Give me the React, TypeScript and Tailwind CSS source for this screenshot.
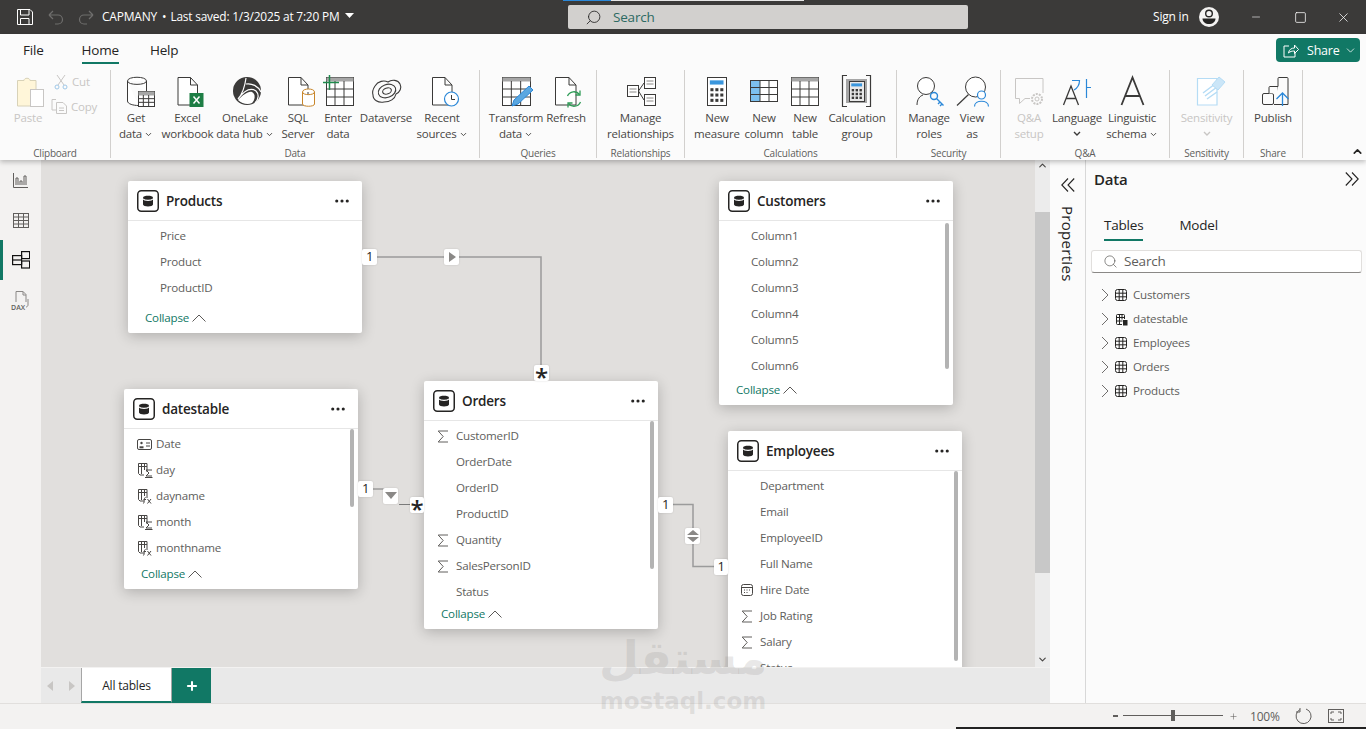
import type { ReactNode } from "react";
import { ChevronDown, ChevronUp, Search, Minus, Square, X, Plus, MoreHorizontal } from "lucide-react";

const INK = "#3b3a39";
const OFF = "#c8c6c4";

// icon slot of a ribbon button: viewBox is in page coordinates, so c = centre x of the button
function RibbonButton({ w, c, lines, off, chev, children }: { w: number; c: number; lines: string[]; off?: boolean; chev?: boolean; children: ReactNode }) {
  return (
    <div className={`flex flex-col items-center shrink-0 text-[11.5px] leading-[16px] ${off ? "text-[#c8c6c4]" : "text-[#484644]"}`} style={{ width: w }}>
      <svg width="60" height="35" viewBox={`${c - 30} 74 60 35`} fill="none" className="shrink-0 overflow-visible mb-[1px]">
        {children}
      </svg>
      {lines.map((l, i) => (
        <div key={l} className="flex items-center whitespace-nowrap h-[16px]">
          {l}
          {chev && i === lines.length - 1 && <ChevronDown size={9} strokeWidth={2.5} className="ml-[2px]" />}
        </div>
      ))}
    </div>
  );
}

function Group({ w, label, pl = 0, children }: { w: number; label: string; pl?: number; children?: ReactNode }) {
  return (
    <div className="relative flex flex-col shrink-0 border-r border-[#d2d0ce] mt-[2px] h-[88px]" style={{ width: w }}>
      <div className="flex mt-[4px]" style={{ paddingLeft: pl }}>{children}</div>
      <div className="absolute left-0 right-0 -bottom-[2px] text-center text-[10px] leading-[14px] text-[#605e5c]">{label}</div>
    </div>
  );
}

function Doc({ x, r = 0 }: { x: number; r?: number }) {
  const e = x + 20 + r;
  return <path d={`M${x + .5} 77.5H${e - 7}L${e} 85V105H${x + .5}Z M${e - 7} 77.5V85H${e}`} stroke={INK} fill="#fff" />;
}

function GridTable({ x, y, w, h, head = true }: { x: number; y: number; w: number; h: number; head?: boolean }) {
  const top = head ? y + 4 : y;
  const rowH = (y + h - top) / 3;
  return (
    <g stroke={INK} fill="#fff">
      <rect x={x + .5} y={y + .5} width={w} height={h} />
      {head && <rect x={x + .5} y={y + .5} width={w} height={4} fill="#a6a6a6" stroke="none" />}
      <path d={`M${x + w / 3} ${top}V${y + h} M${x + (2 * w) / 3} ${top}V${y + h} M${x} ${top + rowH}H${x + w} M${x} ${top + 2 * rowH}H${x + w}`} fill="none" />
    </g>
  );
}

function Calc({ x, y, w, h, dim }: { x: number; y: number; w: number; h: number; dim?: boolean }) {
  const dots = [];
  for (let r = 0; r < 3; r++) for (let c = 0; c < 3; c++) dots.push(<rect key={`${r}${c}`} x={x + w * 0.18 + c * w * 0.26} y={y + h * 0.4 + r * h * 0.19} width={w * 0.16} height={w * 0.16} fill={INK} />);
  return (
    <g>
      <rect x={x + .5} y={y + .5} width={w} height={h} stroke={INK} fill={dim ? "#e8e8e8" : "#fff"} />
      <rect x={x + w * 0.15} y={y + h * 0.12} width={w * 0.72} height={h * 0.15} fill="#3a96dd" />
      {dots}
    </g>
  );
}

function SigmaIcon() {
  return (
    <svg width="12" height="13" viewBox="0 0 12 13" fill="none" stroke="#605e5c">
      <path d="M11 1H1.2L6.2 6.5L1.2 12H11" />
    </svg>
  );
}

function IdIcon() {
  return (
    <svg width="15" height="11" viewBox="0 0 15 11" fill="none" stroke="#484644">
      <rect x=".5" y=".5" width="14" height="10" rx="1.5" />
      <circle cx="4.5" cy="4" r="1.2" fill="#484644" stroke="none" />
      <path d="M2.5 8.3h4" strokeWidth="2" />
      <path d="M9 4h4M9 7h4" />
    </svg>
  );
}

function CalcColIcon({ fx }: { fx?: boolean }) {
  return (
    <svg width="16" height="16" viewBox="0 0 16 16" fill="none" stroke="#484644" strokeWidth="1">
      <path d="M10 10V1.5H1.5V11.5L3 13H7 M1.5 4.5H10 M4.5 1.5V12 M7.5 1.5V8" />
      {fx ? (
        <path d="M8.5 9.5c-1 0-1 1-1.2 3s-.3 2.8-1.3 2.8 M6.5 11.5H9 M10.5 11l3.5 4.5 M14 11l-3.5 4.5" />
      ) : (
        <path d="M15 8H9l3 3-3 3h6 M8 15.5h7.5" />
      )}
    </svg>
  );
}

function CalendarIcon() {
  return (
    <svg width="12" height="12" viewBox="0 0 12 12" fill="none" stroke="#484644">
      <rect x=".5" y=".5" width="11" height="11" rx="2" />
      <path d="M.5 3.5h11" />
      <path d="M3 6h1M5.5 6h1M8 6h1M3 8.5h1M5.5 8.5h1" />
    </svg>
  );
}

function TableHeadIcon() {
  return (
    <svg width="22" height="22" viewBox="0 0 22 22" fill="none">
      <rect x=".75" y=".75" width="20.5" height="20.5" rx="3.5" stroke="#252423" strokeWidth="1.5" />
      <path d="M6 7.5C6 5 16 5 16 7.5V14.5C16 17 6 17 6 14.5Z" fill="#252423" />
      <path d="M6 8.8C7.5 10.8 14.5 10.8 16 8.8" stroke="#fff" strokeWidth="1.2" />
    </svg>
  );
}

function DoubleChevron({ left }: { left?: boolean }) {
  return (
    <svg width="14" height="14" viewBox="0 0 14 14" fill="none" stroke="#252423" strokeWidth="1.1">
      <path d={left ? "M7 .5L.8 7L7 13.5 M13.2 .5L7 7L13.2 13.5" : "M7 .5L13.2 7L7 13.5 M.8 .5L7 7L.8 13.5"} />
    </svg>
  );
}

type Col = { name: string; icon?: ReactNode };

function TableCard({ x, y, w = 234, h, title, cols, bar }: { x: number; y: number; w?: number; h: number; title: string; cols: Col[]; bar?: [number, number] }) {
  return (
    <div className="absolute flex flex-col bg-white rounded-[2px] shadow-[0_3px_14px_rgba(0,0,0,0.22)]" style={{ left: x, top: y, width: w, height: h }}>
      <div className="flex items-center h-[40px] shrink-0 border-b border-[#e6e6e6] pl-[9px] pr-[11px]">
        <TableHeadIcon />
        <span className="ml-[7px] mt-[2px] text-[13.5px] font-semibold text-[#252423]">{title}</span>
        <MoreHorizontal size={18} strokeWidth={2.2} className="ml-auto text-[#252423]" />
      </div>
      <div className="relative flex-1 min-h-0 overflow-hidden pt-[2px]">
        {cols.map((c) => (
          <div key={c.name} className="flex items-center h-[26px] pl-[13px] text-[11.6px] text-[#605e5c] whitespace-nowrap">
            <span className="w-[19px] flex items-center shrink-0">{c.icon}</span>
            {c.name}
          </div>
        ))}
        {bar && <div className="absolute right-[4px] w-[4px] rounded-[2px] bg-[#b3b3b3]" style={{ top: bar[0], height: bar[1] }} />}
      </div>
      {title !== "Employees" && (
        <div className="flex items-center h-[30px] shrink-0 pl-[17px] text-[11.6px] text-[#117865]">
          Collapse
          <svg width="14" height="8" viewBox="0 0 14 8" fill="none" stroke="#484644" strokeWidth=".9" className="ml-[3px]">
            <path d="M.5 7.500L7 1l6.500 6.500" />
          </svg>
        </div>
      )}
    </div>
  );
}

function Tag({ x, y, w = 15, h = 16, children }: { x: number; y: number; w?: number; h?: number; children: ReactNode }) {
  return (
    <div className="absolute flex items-center justify-center bg-white rounded-[2px] text-[13px] font-medium text-[#252423] shadow-[0_0_2px_rgba(0,0,0,0.15)]" style={{ left: x, top: y, width: w, height: h }}>
      {children}
    </div>
  );
}

function Star() {
  return <span className="text-[24px] leading-none font-semibold mt-[7px]">*</span>;
}

function TreeRow({ name, calc }: { name: string; calc?: boolean }) {
  return (
    <div className="flex items-center h-[24px] text-[11.6px] text-[#605e5c]">
      <svg width="8" height="14" viewBox="0 0 8 14" fill="none" stroke="#605e5c" strokeWidth=".9" className="ml-[15px]">
        <path d="M1 1l6 6-6 6" />
      </svg>
      <svg width="13" height="13" viewBox="0 0 13 13" fill="none" stroke="#252423" className="ml-[6px]">
        {calc ? (
          <>
            <path d="M7 11.5H2.5a1 1 0 0 1-1-1v-8a1 1 0 0 1 1-1h6a1 1 0 0 1 1 1V6 M1.5 4.5h8 M1.5 8h6 M4.5 1.5v10 M7 1.5v5" />
            <rect x="8" y="7" width="4.5" height="5.5" fill="#252423" stroke="none" />
          </>
        ) : (
          <>
            <rect x=".5" y=".5" width="11" height="11" rx="2" />
            <path d="M4.2.5v11 M7.8.5v11 M.5 4.2h11 M.5 7.8h11" />
          </>
        )}
      </svg>
      <span className="ml-[5px]">{name}</span>
    </div>
  );
}

const sig = <SigmaIcon />;

export default function App() {
  return (
    <div className="relative flex flex-col h-[729px] w-[1366px] overflow-hidden bg-[#f3f2f1] font-['Open_Sans','Noto_Sans',sans-serif] tracking-[-0.2px]">
      {/* title bar */}
      <div className="relative flex items-center h-[34px] shrink-0 bg-[#3b3a39] text-white">
        <div className="absolute left-[563px] top-0 h-[1px] w-[48px] bg-[#2b88d8]" />
        <div className="absolute left-[611px] top-0 h-[1px] w-[193px] bg-[#e6e6e6]" />
        <svg width="16" height="16" viewBox="0 0 16 16" fill="none" stroke="#fff" className="ml-[17px] shrink-0">
          <path d="M.5.5H13L15.5 3V15.5H.5Z M3.5.5V6H12V.5 M3.5 15.5V9.5H12V15.5" />
        </svg>
        <svg width="16" height="16" viewBox="0 0 16 16" fill="none" stroke="#6f6e6d" strokeWidth="1.2" className="ml-[15px] shrink-0">
          <path d="M1 6H10a4.5 4.5 0 0 1 0 9H7 M1 6l4-4 M1 6l4 4" />
        </svg>
        <svg width="16" height="16" viewBox="0 0 16 16" fill="none" stroke="#6f6e6d" strokeWidth="1.2" className="ml-[14px] shrink-0">
          <path d="M15 6H6a4.5 4.5 0 0 0 0 9h3 M15 6l-4-4 M15 6l-4 4" />
        </svg>
        <span className="ml-[8px] text-[12px] whitespace-nowrap">CAPMANY</span>
        <span className="ml-[5px] text-[12px]">•</span>
        <span className="ml-[4px] text-[11.9px] whitespace-nowrap">Last saved: 1/3/2025 at 7:20 PM</span>
        <svg width="9" height="5" viewBox="0 0 9 5" fill="#fff" className="ml-[6px] mb-[3px]"><path d="M0 0h9L4.5 5Z" /></svg>

        <div className="absolute left-[568px] top-[5px] flex items-center w-[400px] h-[24px] rounded-[2px] bg-[#d2d0ce] pl-[17px]">
          <Search size={17} strokeWidth={1.2} className="-scale-x-100 text-[#252423]" />
          <span className="ml-[11px] text-[13.5px] text-[#2d6a62]">Search</span>
        </div>

        <span className="absolute left-[1153px] text-[12px]">Sign in</span>
        <svg width="20" height="20" viewBox="0 0 20 20" className="absolute left-[1199px] top-[7px]">
          <circle cx="10" cy="10" r="10" fill="#f3f2f1" />
          <circle cx="10" cy="6.5" r="3.3" fill="none" stroke="#252423" strokeWidth="1.4" />
          <path d="M3.5 11.5h13c0 3.5-3 5.5-6.500 5.500s-6.500-2-6.500-5.500Z" fill="#252423" />
        </svg>
        <Minus size={12} strokeWidth={1.2} className="absolute left-[1250px] top-[11px]" />
        <Square size={13} strokeWidth={1.4} className="absolute left-[1294px] top-[11px]" />
        <X size={15} strokeWidth={1.2} className="absolute left-[1336px] top-[10px]" />
      </div>

      {/* ribbon */}
      <div className="relative z-10 h-[126px] shrink-0 bg-[#fbfbfb] shadow-[0_2px_5px_rgba(0,0,0,0.25)]">
        <div className="flex items-start h-[34px] text-[13.5px] text-[#252423] pt-[6px]">
          <span className="ml-[23px]">File</span>
          <span className="ml-[38px] font-medium border-b-[2px] border-[#117865] h-[24px] leading-[20px]">Home</span>
          <span className="ml-[31px]">Help</span>
          <div className="absolute left-[1276px] top-[4px] flex items-center w-[84px] h-[24px] rounded-[4px] bg-[#117865] text-white text-[12.5px] pl-[7px]">
            <svg width="16" height="15" viewBox="0 0 16 15" fill="none" stroke="#fff">
              <path d="M6 3H1v11h11v-4 M5.500 10c.5-3.500 3-5 6-5V2l4 4.500-4 4V8c-2.500 0-4.500.5-6 2Z" />
            </svg>
            <span className="ml-[8px] mt-[2px]">Share</span>
            <ChevronDown size={13} strokeWidth={1.4} className="ml-[4px]" />
          </div>
        </div>

        <div className="flex items-start">
          <Group w={111} label="Clipboard">
            <div className="relative w-[56px] flex flex-col items-center text-[11.5px] leading-[16px] text-[#c8c6c4]">
              <svg width="36" height="35" viewBox="10 74 36 35" fill="none" className="shrink-0 mb-[1px]">
                <path d="M17.500 80.500H24c0-3 6-3 6 0h6V106H17.500Z" fill="#fff6d9" stroke="#d8d2b8" />
                <rect x="30.500" y="89.500" width="13" height="17" fill="#fff" stroke={OFF} />
              </svg>
              Paste
            </div>
            <div className="flex flex-col text-[11.5px] text-[#c8c6c4] -ml-[5px]">
              <div className="flex items-center h-[25px] -mt-[5px]">
                <svg width="14" height="16" viewBox="0 0 14 16" fill="none" stroke={OFF} className="ml-[3px]">
                  <path d="M3 1l7 10 M11 1L4 11" />
                  <circle cx="3" cy="13" r="2" stroke="#9fc8e8" />
                  <circle cx="11" cy="13" r="2" stroke="#9fc8e8" />
                </svg>
                <span className="ml-[4px]">Cut</span>
              </div>
              <div className="flex items-center h-[25px]">
                <svg width="17" height="15" viewBox="0 0 17 15" fill="none" stroke={OFF}>
                  <path d="M5 .5H1V11h4 M5.500 3.500H12l3.500 3.500V14.500h-10Z M8 9h5M8 11.500h5" />
                </svg>
                <span className="ml-[3px]">Copy</span>
              </div>
            </div>
          </Group>

          <Group w={369} label="Data">
            <RibbonButton w={50} c={136} lines={["Get", "data"]} chev>
              <path d="M127.500 81c0-5 19-5 19 0V92M127.500 81V101c0 3 6 4.500 11 4.500M127.500 81c0 4.500 19 4.500 19 0" stroke={INK} fill="#fff" />
              <GridTable x={138} y={91} w={16} h={15} />
            </RibbonButton>
            <RibbonButton w={53} c={187.5} lines={["Excel", "workbook"]}>
              <Doc x={177} />
              <rect x="189" y="93" width="14" height="14" fill="#1e7e45" />
              <path d="M193 96.500l6 7 M199 96.500l-6 7" stroke="#fff" strokeWidth="1.5" />
            </RibbonButton>
            <RibbonButton w={62} c={245} lines={["OneLake", "data hub"]} chev>
              <circle cx="247" cy="91" r="14" fill="#3b3a39" />
              <path d="M246 78c-1 8-3 15-8 21 M246 84c6-1 12 2 15 8 M238 99c6-8 12-12 18-8 3 3 3 8-1 12" stroke="#fff" strokeWidth="1.2" />
              <path d="M238 100c5-5 10-9 14-8 4 2 3 8 0 11-4 2-10 1-14-3Z" fill="#fff" />
            </RibbonButton>
            <RibbonButton w={44} c={298} lines={["SQL", "Server"]}>
              <Doc x={288} />
              <path d="M302.500 92c0-4 12-4 12 0V104c0 3-12 3-12 0Z M302.500 92c0 3.500 12 3.500 12 0" stroke="#c8862b" fill="#fff" />
            </RibbonButton>
            <RibbonButton w={36} c={338} lines={["Enter", "data"]}>
              <GridTable x={326} y={77} w={27} h={28} />
              <path d="M329.500 75V90 M323 82.500H339" stroke="#1e8a4c" strokeWidth="1.5" />
            </RibbonButton>
            <RibbonButton w={60} c={386} lines={["Dataverse"]}>
              <g stroke={INK} strokeWidth="1.1">
                <path d="M375 86c3-5 9-6 13-4 4-3 10-2 12 2 2 4 0 8-4 10-1 5-6 8-12 8-6 1-11-2-11-7-1-3 0-6 2-9Z" />
                <ellipse cx="387" cy="91" rx="9" ry="6.500" transform="rotate(-20 387 91)" />
                <ellipse cx="387" cy="91" rx="4.500" ry="3" transform="rotate(-20 387 91)" />
              </g>
            </RibbonButton>
            <RibbonButton w={52} c={442} lines={["Recent", "sources"]} chev>
              <Doc x={432} />
              <circle cx="451.500" cy="99" r="7" stroke="#2b88d8" strokeWidth="1.2" fill="#fff" />
              <path d="M451.500 95v4.500h3.500" stroke={INK} />
            </RibbonButton>
          </Group>

          <Group w={117} label="Queries" pl={6}>
            <RibbonButton w={60} c={516} lines={["Transform", "data"]} chev>
              <GridTable x={502} y={77} w={28} h={28} />
              <path d="M512 106l2-6 15-14 4 4-15 14Z" fill="#5ba7e0" stroke="#2b88d8" />
            </RibbonButton>
            <RibbonButton w={40} c={566} lines={["Refresh"]}>
              <Doc x={555} r={1} />
              <path d="M567.500 96a7 7 0 0 1 12-1.500M580.500 102a7 7 0 0 1-12 1.500" stroke="#2e9b56" strokeWidth="1.3" fill="none" />
              <path d="M580 90.500v4.500h-4.500 M568 107.500V103h4.500" stroke="#2e9b56" strokeWidth="1.3" />
            </RibbonButton>
          </Group>

          <Group w={88} label="Relationships">
            <RibbonButton w={87} c={640} lines={["Manage", "relationships"]}>
              <g stroke={INK} fill="#fff">
                <rect x="626.500" y="85.500" width="11" height="11" />
                <rect x="643.500" y="77.500" width="11" height="11" />
                <rect x="643.500" y="94.500" width="11" height="11" />
                <path d="M637.500 91L643 83 M637.500 91L643 100" />
                <path d="M628.500 89h7M628.500 92h7M645.500 81h7M645.500 84h7M645.500 98h7M645.500 101h7" stroke="#8a8886" />
              </g>
            </RibbonButton>
          </Group>

          <Group w={212} label="Calculations" pl={9}>
            <RibbonButton w={46} c={717} lines={["New", "measure"]}>
              <Calc x={707} y={77} w={19} h={28} />
            </RibbonButton>
            <RibbonButton w={48} c={764} lines={["New", "column"]}>
              <rect x="750.500" y="80.500" width="27" height="21" stroke={INK} fill="#fff" />
              <rect x="751" y="81" width="9" height="20" fill="#7cc0ee" />
              <path d="M760 80.500V101.500 M769 80.500V101.500 M750.500 87.500H777.500 M750.500 94.500H777.500" stroke={INK} />
            </RibbonButton>
            <RibbonButton w={34} c={805} lines={["New", "table"]}>
              <GridTable x={791} y={77} w={27} h={28} />
            </RibbonButton>
            <RibbonButton w={70} c={857} lines={["Calculation", "group"]}>
              <path d="M847 75.500H842.500V106.500H847 M866 75.500H870.500V106.500H866" stroke={INK} strokeWidth="1.2" />
              <rect x="846" y="79" width="21" height="24" fill="#a6a6a6" />
              <Calc x={849} y={81} w={15} h={20} dim />
            </RibbonButton>
          </Group>

          <Group w={104} label="Security" pl={8}>
            <RibbonButton w={48} c={929} lines={["Manage", "roles"]}>
              <circle cx="926" cy="86" r="8.500" stroke={INK} fill="#fff" />
              <path d="M917 105c0-6 3-9 6-10" stroke={INK} />
              <circle cx="934" cy="96" r="3.500" stroke="#2b88d8" strokeWidth="1.4" />
              <path d="M936.500 98.500l7 7 M940 102l-2 2 M942 104l-2 2" stroke="#2b88d8" strokeWidth="1.4" />
            </RibbonButton>
            <RibbonButton w={38} c={972} lines={["View", "as"]}>
              <circle cx="975.500" cy="87" r="10" stroke={INK} fill="#fff" />
              <path d="M968.500 94.500L957 105.500" stroke={INK} strokeWidth="1.2" />
              <circle cx="981.500" cy="95" r="4" stroke="#2b88d8" strokeWidth="1.2" fill="#fff" />
              <path d="M974.500 106.500c0-7 14-7 14 0" stroke="#2b88d8" strokeWidth="1.2" />
            </RibbonButton>
          </Group>

          <Group w={169} label="Q&A" pl={8}>
            <RibbonButton w={40} c={1029} lines={["Q&A", "setup"]} off>
              <path d="M1015.500 78.500H1043V93M1030 98.500H1025L1019.500 103.500V98.500H1015.500V78.500" stroke={OFF} />
              <circle cx="1037" cy="99" r="5" stroke={OFF} strokeWidth="2" strokeDasharray="2 1.100" />
              <circle cx="1037" cy="99" r="2" stroke={OFF} />
            </RibbonButton>
            <RibbonButton w={56} c={1077} lines={["Language", ""]}>
              <path d="M1063.500 105L1071 86L1078.500 105 M1066 98.500H1076" stroke={INK} strokeWidth="1.3" />
              <path d="M1072 80.500H1079.500C1079.500 85 1077.500 88 1074 90 M1086.500 79V98 M1086.500 87.500H1091" stroke="#2b88d8" strokeWidth="1.2" />
              <g transform="translate(1074 132)"><path d="M0 0l3 3 3-3" stroke={INK} strokeWidth="1.4" /></g>
            </RibbonButton>
            <RibbonButton w={54} c={1132} lines={["Linguistic", "schema"]} chev>
              <path d="M1121.500 105L1132.500 77.500L1143.500 105 M1125 96H1140" stroke={INK} strokeWidth="1.8" />
            </RibbonButton>
          </Group>

          <Group w={74} label="Sensitivity">
            <RibbonButton w={73} c={1206} lines={["Sensitivity", ""]} off>
              <path d="M1196.500 78.500H1216V105H1196.500Z" stroke="#b5dcf5" strokeWidth="1.2" fill="#fff" />
              <path d="M1202 93l12-9 M1204 96l12-9 M1206 99l10-7" stroke="#b5dcf5" strokeWidth="1.5" />
              <path d="M1211 85l7-8 6 5-7 8Z" fill="#cbe6f8" stroke="#b5dcf5" />
              <g transform="translate(1203 132)"><path d="M0 0l3 3 3-3" stroke={OFF} strokeWidth="1.4" /></g>
            </RibbonButton>
          </Group>

          <Group w={59} label="Share">
            <RibbonButton w={58} c={1273} lines={["Publish"]}>
              <g stroke={INK} fill="#fbfbfb">
                <rect x="1262.500" y="93.500" width="11" height="11" rx="1.500" />
                <path d="M1269 93.500V87.500a1 1 0 0 1 1-1h8V93" />
                <path d="M1278 86.500V78.500a1 1 0 0 1 1-1h8a1 1 0 0 1 1 1V104.500H1274" />
              </g>
              <path d="M1282.500 106V93 M1276.500 99l6-6 6 6" stroke="#2b88d8" strokeWidth="1.3" />
            </RibbonButton>
          </Group>
        </div>
        <ChevronUp size={13} strokeWidth={3} className="absolute right-[2px] bottom-[2px] text-[#252423]" />
      </div>

      {/* main */}
      <div className="flex flex-1 min-h-0">
        {/* left nav */}
        <div className="flex flex-col w-[41px] shrink-0 bg-[#f3f2f1]">
          <div className="flex items-center justify-center h-[40px]">
            <svg width="15" height="15" viewBox="0 0 15 15" fill="none" stroke="#605e5c">
              <path d="M.5 0V14.500H15 M3 12V5h2v7 M7 12V8h2v4 M11 12V3h2v9" />
            </svg>
          </div>
          <div className="flex items-center justify-center h-[40px]">
            <svg width="16" height="15" viewBox="0 0 16 15" fill="none" stroke="#605e5c">
              <rect x=".5" y=".5" width="15" height="14" />
              <path d="M.5 4h15M.5 7.500h15M.5 11h15M5.500.5v14M10.500.5v14" />
            </svg>
          </div>
          <div className="flex items-center justify-center h-[40px] border-l-[3px] border-[#117865] pr-[3px]">
            <svg width="18" height="18" viewBox="0 0 18 18" fill="none" stroke="#111" strokeWidth="1.2">
              <rect x=".6" y="4.600" width="9" height="9" />
              <rect x="9.600" y=".6" width="8" height="7" />
              <rect x="9.600" y="10" width="8" height="7" />
              <path d="M.6 9h9" />
            </svg>
          </div>
          <div className="relative flex items-center justify-center h-[40px]">
            <svg width="18" height="18" viewBox="0 0 18 18" fill="none" stroke="#8a8886">
              <path d="M4 11V.5H11L14 3.500V11 M11 .5V4H14 M16 8v6c0 1-1 2-2 2" />
            </svg>
            <span className="absolute left-[11px] top-[24px] text-[7px] font-semibold leading-none text-[#605e5c] tracking-normal">DAX</span>
          </div>
        </div>

        {/* canvas + tabs */}
        <div className="flex flex-col w-[1009px] shrink-0">
          <div className="flex flex-1 min-h-0">
            <div className="relative w-[994px] shrink-0 bg-[#e1dfdd] overflow-hidden">
              <TableCard x={87} y={21} h={152} title="Products" cols={[{ name: "Price" }, { name: "Product" }, { name: "ProductID" }]} />
              <TableCard
                x={678} y={21} h={224} title="Customers" bar={[2, 146]}
                cols={["Column1", "Column2", "Column3", "Column4", "Column5", "Column6"].map((name) => ({ name }))}
              />
              <TableCard
                x={83} y={229} h={200} title="datestable" bar={[0, 78]}
                cols={[
                  { name: "Date", icon: <IdIcon /> },
                  { name: "day", icon: <CalcColIcon /> },
                  { name: "dayname", icon: <CalcColIcon fx /> },
                  { name: "month", icon: <CalcColIcon /> },
                  { name: "monthname", icon: <CalcColIcon fx /> },
                ]}
              />
              <TableCard
                x={383} y={221} h={248} title="Orders" bar={[0, 148]}
                cols={[
                  { name: "CustomerID", icon: sig },
                  { name: "OrderDate" },
                  { name: "OrderID" },
                  { name: "ProductID" },
                  { name: "Quantity", icon: sig },
                  { name: "SalesPersonID", icon: sig },
                  { name: "Status" },
                ]}
              />
              <TableCard
                x={687} y={271} h={260} title="Employees" bar={[0, 190]}
                cols={[
                  { name: "Department" },
                  { name: "Email" },
                  { name: "EmployeeID" },
                  { name: "Full Name" },
                  { name: "Hire Date", icon: <CalendarIcon /> },
                  { name: "Job Rating", icon: sig },
                  { name: "Salary", icon: sig },
                  { name: "Status" },
                ]}
              />

              {/* relationships */}
              <svg width="994" height="507" className="absolute left-0 top-0 pointer-events-none" fill="none">
                <path d="M335 97H500V205" stroke="#9b9b9b" strokeWidth="1.5" />
                <path d="M332 329H344 M358 344.500H369" stroke="#7a7a7a" />
                <path d="M632 344.500H652V406.500H673" stroke="#9b9b9b" strokeWidth="1.500" />
              </svg>
              <Tag x={321} y={89}>1</Tag>
              <Tag x={403} y={89}>
                <svg width="10" height="10" viewBox="0 0 10 10" fill="#8a8886"><path d="M2 0l7 5-7 5Z" /></svg>
              </Tag>
              <Tag x={493} y={205}><Star /></Tag>
              <Tag x={317} y={321}>1</Tag>
              <Tag x={342} y={328}>
                <svg width="12" height="8" viewBox="0 0 12 8" fill="#8a8886"><path d="M0 0h12L6 7Z" /></svg>
              </Tag>
              <Tag x={369} y={337} w={14}><Star /></Tag>
              <Tag x={617} y={337}>1</Tag>
              <Tag x={644} y={368}>
                <svg width="12" height="12" viewBox="0 0 12 12" fill="#8a8886"><path d="M0 5L6 0l6 5Z M0 7h12l-6 5Z" /></svg>
              </Tag>
              <Tag x={673} y={399} w={14}>1</Tag>
            </div>
            {/* canvas scrollbar */}
            <div className="flex flex-col items-center w-[15px] shrink-0 bg-[#ececec]">
              <ChevronUp size={11} strokeWidth={2.5} className="text-[#484644]" />
              <div className="w-full h-[361px] bg-[#c8c8c8] mt-[41px]" />
              <ChevronDown size={11} strokeWidth={2.5} className="mt-[81px] text-[#484644]" />
            </div>
          </div>
          <div className="flex items-stretch h-[36px] shrink-0 bg-[#e9e9e9] border-t border-[#f3f2f1]">
            <div className="flex items-center w-[40px] pl-[6px] gap-[16px]">
              <svg width="6" height="10" viewBox="0 0 6 10" fill="#c8c6c4"><path d="M6 0v10L0 5Z" /></svg>
              <svg width="6" height="10" viewBox="0 0 6 10" fill="#c8c6c4"><path d="M0 0v10l6-5Z" /></svg>
            </div>
            <div className="flex items-center justify-center w-[91px] pt-[2px] bg-white border-x border-[#a6a6a6] border-b-[2px] border-b-[#117865] text-[12px] text-[#252423]">All tables</div>
            <div className="flex items-center justify-center w-[39px] bg-[#117865] text-white">
              <Plus size={14} strokeWidth={3.5} />
            </div>
          </div>
        </div>

        {/* properties */}
        <div className="flex flex-col items-center w-[36px] shrink-0 bg-[#fbfbfb] border-r border-[#d8d8d8]">
          <div className="mt-[18px]"><DoubleChevron left /></div>
          <span className="mt-[14px] [writing-mode:vertical-rl] text-[15px] font-medium tracking-[0.3px] text-[#252423]">Properties</span>
        </div>

        {/* data pane */}
        <div className="flex flex-col flex-1 min-w-0 bg-[#fbfbfb]">
          <div className="flex items-center justify-between h-[40px] pl-[8px] pr-[7px] -mt-[1px] mb-[1px]">
            <span className="text-[15px] font-semibold text-[#252423]">Data</span>
            <DoubleChevron />
          </div>
          <div className="flex items-start h-[50px] pl-[18px] pt-[15px] text-[13.5px] text-[#252423]">
            <span className="font-medium h-[26px] border-b-[2px] border-[#117865]">Tables</span>
            <span className="ml-[36px]">Model</span>
          </div>
          <div className="flex items-center h-[23px] ml-[5px] mr-[4px] bg-white rounded-[3px] border border-[#e1dfdd] border-b-[#8a8886] pl-[11px]">
            <Search size={15} strokeWidth={1} className="text-[#484644]" />
            <span className="ml-[6px] text-[13.500px] text-[#605e5c]">Search</span>
          </div>
          <div className="pt-[10px]">
            <TreeRow name="Customers" />
            <TreeRow name="datestable" calc />
            <TreeRow name="Employees" />
            <TreeRow name="Orders" />
            <TreeRow name="Products" />
          </div>
        </div>
      </div>

      {/* status bar */}
      <div className="relative flex items-center justify-end h-[26px] shrink-0 bg-[#f3f2f1] border-t border-[#e1dfdd] text-[12px] text-[#605e5c]">
        <div className="absolute left-[1113px] top-[11px] w-[5px] h-[2px] bg-[#605e5c]" />
        <div className="absolute left-[1123px] top-[11px] w-[100px] h-[1px] bg-[#605e5c]" />
        <div className="absolute left-[1171px] top-[6px] w-[4px] h-[11px] bg-[#605e5c]" />
        <Plus size={9} strokeWidth={1.5} className="absolute left-[1229px] top-[8px]" />
        <span className="absolute left-[1250px] top-[4px]">100%</span>
        <svg width="18" height="18" viewBox="0 0 18 18" fill="none" stroke="#605e5c" className="absolute left-[1295px] top-[3px]">
          <path d="M11 2a7.500 7.500 0 1 1-6 .5 M5 1v4H1" />
        </svg>
        <svg width="16" height="14" viewBox="0 0 16 14" fill="none" stroke="#605e5c" className="absolute left-[1328px] top-[5px]">
          <rect x=".5" y=".5" width="15" height="13" />
          <path d="M3 5V3h3 M10 3h3v2 M13 9v2h-3 M6 11H3V9" />
        </svg>
        <div className="absolute left-[956px] right-0 bottom-0 h-[2px] bg-[#222]" />
      </div>

      {/* watermark */}
      <div className="absolute left-[600px] top-[627px] w-[166px] flex flex-col items-center pointer-events-none text-[#8a8886]/20 font-['DejaVu_Sans',sans-serif] font-bold tracking-normal">
        <span className="text-[46px] leading-[62px]">مستقل</span>
        <span className="text-[23px] leading-[24px]">mostaql.com</span>
      </div>
    </div>
  );
}
